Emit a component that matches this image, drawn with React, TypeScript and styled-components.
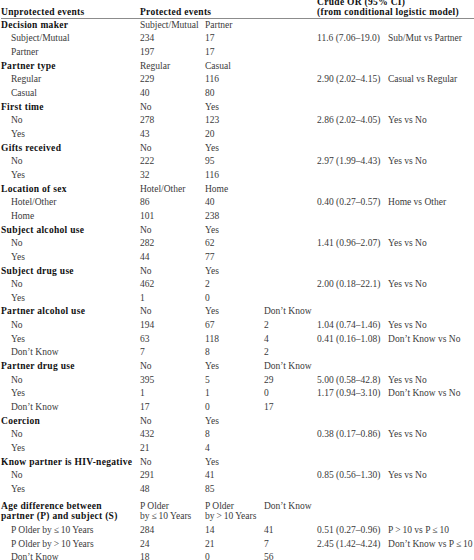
import styled, { createGlobalStyle } from "styled-components";

const GlobalStyle = createGlobalStyle`
  html, body {
    margin: 0;
    padding: 0;
    background: #fff;
    overflow: hidden;
  }
  body {
    width: 474px;
    height: 560px;
  }
`;

const Page = styled.div`
  width: 474px;
  height: 560px;
  overflow: hidden;
  font-family: "Liberation Serif", "Times New Roman", serif;
  font-size: 9.5px;
  color: #3a3a3a;
`;

const Table = styled.table`
  border-collapse: collapse;
  table-layout: fixed;
  width: 540px;
  margin: -3px 0 0 1px;
`;

const HeadCell = styled.th`
  text-align: left;
  vertical-align: bottom;
  font-weight: 700;
  letter-spacing: 0.3px;
  color: #111;
  line-height: 10px;
  padding: 0 0 0.5px;
  white-space: nowrap;
  border-bottom: 1px solid #8c8c8c;
`;

const Cell = styled.td<{ $bold?: boolean; $indent?: boolean; $double?: boolean }>`
  text-align: left;
  vertical-align: top;
  white-space: nowrap;
  line-height: 10px;
  padding: ${(p) => (p.$double ? "4.5px 0 2.84px" : "1.2px 0 2.47px")};
  padding-left: ${(p) => (p.$indent ? "10px" : "0")};
  font-weight: ${(p) => (p.$bold ? 700 : 400)};
  letter-spacing: ${(p) => (p.$bold ? "0.3px" : "0")};
  color: ${(p) => (p.$bold ? "#111" : "#3a3a3a")};
`;

type Row = {
  label: string;
  values: string[];
  or?: string;
  cmp?: string;
};

type Section = {
  title: string[];
  levels: string[][];
  rows: Row[];
};

// thin space, used around the comparison signs as in the printed table
const T = "\u2009";
const LE = `${T}\u2264${T}`;
const GT = `${T}>${T}`;

const sections: Section[] = [
  {
    title: ["Decision maker"],
    levels: [["Subject/Mutual"], ["Partner"]],
    rows: [
      { label: "Subject/Mutual", values: ["234", "17"], or: "11.6 (7.06–19.0)", cmp: "Sub/Mut vs Partner" },
      { label: "Partner", values: ["197", "17"] },
    ],
  },
  {
    title: ["Partner type"],
    levels: [["Regular"], ["Casual"]],
    rows: [
      { label: "Regular", values: ["229", "116"], or: "2.90 (2.02–4.15)", cmp: "Casual vs Regular" },
      { label: "Casual", values: ["40", "80"] },
    ],
  },
  {
    title: ["First time"],
    levels: [["No"], ["Yes"]],
    rows: [
      { label: "No", values: ["278", "123"], or: "2.86 (2.02–4.05)", cmp: "Yes vs No" },
      { label: "Yes", values: ["43", "20"] },
    ],
  },
  {
    title: ["Gifts received"],
    levels: [["No"], ["Yes"]],
    rows: [
      { label: "No", values: ["222", "95"], or: "2.97 (1.99–4.43)", cmp: "Yes vs No" },
      { label: "Yes", values: ["32", "116"] },
    ],
  },
  {
    title: ["Location of sex"],
    levels: [["Hotel/Other"], ["Home"]],
    rows: [
      { label: "Hotel/Other", values: ["86", "40"], or: "0.40 (0.27–0.57)", cmp: "Home vs Other" },
      { label: "Home", values: ["101", "238"] },
    ],
  },
  {
    title: ["Subject alcohol use"],
    levels: [["No"], ["Yes"]],
    rows: [
      { label: "No", values: ["282", "62"], or: "1.41 (0.96–2.07)", cmp: "Yes vs No" },
      { label: "Yes", values: ["44", "77"] },
    ],
  },
  {
    title: ["Subject drug use"],
    levels: [["No"], ["Yes"]],
    rows: [
      { label: "No", values: ["462", "2"], or: "2.00 (0.18–22.1)", cmp: "Yes vs No" },
      { label: "Yes", values: ["1", "0"] },
    ],
  },
  {
    title: ["Partner alcohol use"],
    levels: [["No"], ["Yes"], ["Don’t Know"]],
    rows: [
      { label: "No", values: ["194", "67", "2"], or: "1.04 (0.74–1.46)", cmp: "Yes vs No" },
      { label: "Yes", values: ["63", "118", "4"], or: "0.41 (0.16–1.08)", cmp: "Don’t Know vs No" },
      { label: "Don’t Know", values: ["7", "8", "2"] },
    ],
  },
  {
    title: ["Partner drug use"],
    levels: [["No"], ["Yes"], ["Don’t Know"]],
    rows: [
      { label: "No", values: ["395", "5", "29"], or: "5.00 (0.58–42.8)", cmp: "Yes vs No" },
      { label: "Yes", values: ["1", "1", "0"], or: "1.17 (0.94–3.10)", cmp: "Don’t Know vs No" },
      { label: "Don’t Know", values: ["17", "0", "17"] },
    ],
  },
  {
    title: ["Coercion"],
    levels: [["No"], ["Yes"]],
    rows: [
      { label: "No", values: ["432", "8"], or: "0.38 (0.17–0.86)", cmp: "Yes vs No" },
      { label: "Yes", values: ["21", "4"] },
    ],
  },
  {
    title: ["Know partner is HIV-negative"],
    levels: [["No"], ["Yes"]],
    rows: [
      { label: "No", values: ["291", "41"], or: "0.85 (0.56–1.30)", cmp: "Yes vs No" },
      { label: "Yes", values: ["48", "85"] },
    ],
  },
  {
    title: ["Age difference between", "partner (P) and subject (S)"],
    levels: [
      ["P Older", `by${LE}10 Years`],
      ["P Older", `by${GT}10 Years`],
      ["Don’t Know"],
    ],
    rows: [
      { label: `P Older by${LE}10 Years`, values: ["284", "14", "41"], or: "0.51 (0.27–0.96)", cmp: `P${GT}10 vs P${LE}10` },
      { label: `P Older by${GT}10 Years`, values: ["24", "21", "7"], or: "2.45 (1.42–4.24)", cmp: `Don’t Know vs P${LE}10` },
      { label: "Don’t Know", values: ["18", "0", "56"] },
    ],
  },
];

function Lines({ lines }: { lines: string[] }) {
  return (
    <>
      {lines.map((l, i) => (
        <span key={i}>
          {i > 0 && <br />}
          {l}
        </span>
      ))}
    </>
  );
}

export default function App() {
  return (
    <Page>
      <GlobalStyle />
      <Table>
        <colgroup>
          <col style={{ width: 139 }} />
          <col style={{ width: 65 }} />
          <col style={{ width: 59 }} />
          <col style={{ width: 53 }} />
          <col style={{ width: 71 }} />
          <col style={{ width: 153 }} />
        </colgroup>
        <thead>
          <tr>
            <HeadCell>Unprotected events</HeadCell>
            <HeadCell colSpan={3}>Protected events</HeadCell>
            <HeadCell colSpan={2}>
              Crude OR (95% CI)
              <br />
              (from conditional logistic model)
            </HeadCell>
          </tr>
        </thead>
        <tbody>
          {sections.map((s) => {
            const double = s.title.length > 1;
            return [
              <tr key={s.title[0]}>
                <Cell $bold $double={double}>
                  <Lines lines={s.title} />
                </Cell>
                {[0, 1, 2].map((i) => (
                  <Cell key={i} $double={double}>
                    {s.levels[i] && <Lines lines={s.levels[i]} />}
                  </Cell>
                ))}
                <Cell $double={double} />
                <Cell $double={double} />
              </tr>,
              ...s.rows.map((r, j) => (
                <tr key={s.title[0] + j}>
                  <Cell $indent>{r.label}</Cell>
                  {[0, 1, 2].map((i) => (
                    <Cell key={i}>{r.values[i] ?? ""}</Cell>
                  ))}
                  <Cell>{r.or ?? ""}</Cell>
                  <Cell>{r.cmp ?? ""}</Cell>
                </tr>
              )),
            ];
          })}
        </tbody>
      </Table>
    </Page>
  );
}
